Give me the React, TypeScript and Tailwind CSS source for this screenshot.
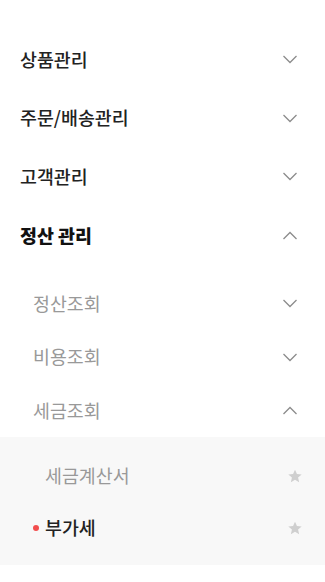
import React from 'react';

const font = { fontFamily: '"Noto Sans CJK KR", "Noto Sans", sans-serif' };

function Chevron({ up = false }: { up?: boolean }) {
  return (
    <svg width="16" height="9" viewBox="0 0 16 9" fill="none" className="shrink-0">
      <path
        d={up ? 'M1.5 8L8 1.5L14.5 8' : 'M1.5 1L8 7.5L14.5 1'}
        stroke="#8c8c8c"
        strokeWidth="1.3"
      />
    </svg>
  );
}

function Star() {
  return (
    <svg width="16" height="16" viewBox="0 0 24 24" className="shrink-0">
      <path
        d="M12 2.5l2.9 6.6 7.1.6-5.4 4.7 1.6 7-6.2-3.7-6.2 3.7 1.6-7L2 9.7l7.1-.6z"
        fill="#cfcfcf"
      />
    </svg>
  );
}

const top = ['상품관리', '주문/배송관리', '고객관리'];

const sub = [
  { label: '정산조회', open: false },
  { label: '비용조회', open: false },
  { label: '세금조회', open: true },
];

export default function App() {
  return (
    <div className="h-[582px] w-[325px] bg-white pt-[30px]" style={font}>
      {top.map((label) => (
        <div key={label} className="flex h-[58.7px] items-center justify-between pl-[20px] pr-[27px]">
          <span className="text-[18.4px] font-medium text-[#222]">{label}</span>
          <Chevron />
        </div>
      ))}
      <div className="flex h-[58.7px] items-center justify-between pl-[20px] pr-[27px]">
        <span className="text-[18.4px] font-black text-[#111]">정산 관리</span>
        <Chevron up />
      </div>

      <div className="pt-[12px]">
        {sub.map((s) => (
          <div key={s.label} className="flex h-[53.5px] items-center justify-between pl-[33px] pr-[27px]">
            <span className="text-[18.4px] text-[#999]">{s.label}</span>
            <Chevron up={s.open} />
          </div>
        ))}
      </div>

      <div className="bg-[#f8f8f8] pb-[11px] pt-[13px]">
        <div className="flex h-[52px] items-center justify-between pl-[45px] pr-[22px]">
          <span className="text-[18.4px] text-[#999]">세금계산서</span>
          <Star />
        </div>
        <div className="relative flex h-[52px] items-center justify-between pl-[45px] pr-[22px]">
          <span className="absolute left-[33px] top-1/2 h-[6px] w-[6px] -translate-y-1/2 rounded-full bg-[#f24d4d]" />
          <span className="text-[18.4px] font-medium text-[#222]">부가세</span>
          <Star />
        </div>
      </div>
    </div>
  );
}
